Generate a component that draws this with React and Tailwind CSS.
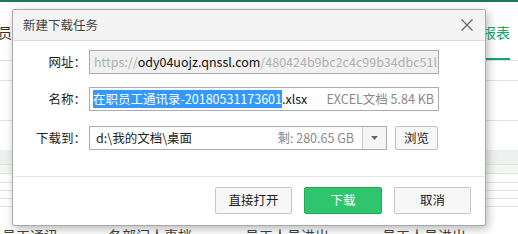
import React from "react";

const F = { fontFamily: '"Noto Sans CJK SC", "Noto Sans", sans-serif' };

function Bg() {
  return (
    <div className="relative w-[518px] h-[234px] overflow-hidden bg-white" style={F}>
      <div className="h-[2px] bg-[#1d7a50]" />
      <div className="flex h-[59px] border-b border-[#e0e0e0] items-start">
        <div className="mt-[22px] ml-[-2px] text-[14px] text-[#333] leading-[16px]">员工</div>
        <div className="flex-1" />
        <div className="mr-[8px] flex flex-col h-full items-stretch">
          <div className="mt-[22px] text-[14px] leading-[16px] text-[#16a56e]">报表</div>
          <div className="mt-auto h-[2px] bg-[#16a56e]" />
        </div>
      </div>
      <div className="h-[20px] border-b border-[#e0e0e0]" />
      <div className="h-[40px] border-b border-[#e0e0e0]" />
      <div className="h-[29px]" />
      <div className="h-[15px] bg-[#eef2ee] border-b border-[#dde4dd]" />
      <div className="h-[9px] bg-[#f4f6f4] border-b border-[#dde4dd]" />
      <div className="h-[9px] border-b border-[#e3e3e3]" />
      <div className="h-[8px] border-b border-[#e3e3e3]" />
      <div className="h-[8px] border-b border-[#e3e3e3]" />
      <div className="h-[8px] border-b border-[#e3e3e3]" />
      <div className="h-[19px]" />
      <div className="flex text-[14px] leading-[16px] text-[#444] mt-[1px]">
        <span className="ml-[2px] w-[106px]">员工通讯</span>
        <span className="w-[137px]">各部门人事档</span>
        <span className="w-[137px]">员工人员进出</span>
        <span>员工人员进出</span>
      </div>
    </div>
  );
}

function Label({ children }) {
  return (
    <div className="w-[73px] text-right text-[12.5px] text-[#222] whitespace-nowrap">
      {children}
    </div>
  );
}

function Dialog() {
  return (
    <div
      className="absolute left-[12px] top-[9px] w-[474px] h-[217px] border border-[#a9a9a9] rounded-[2px] bg-white flex flex-col shadow-[2px_3px_10px_rgba(0,0,0,0.28)]"
      style={F}
    >
      <div className="h-[31px] shrink-0 bg-[#f4f4f4] border-b border-[#dcdcdc] flex items-center pl-[10px] pr-[12px] rounded-t-[2px]">
        <span className="text-[12.5px] text-[#444] leading-none">新建下载任务</span>
        <div className="flex-1" />
        <svg width="12" height="12" viewBox="0 0 12 12">
          <path d="M0.5 0.5 L11.5 11.5 M11.5 0.5 L0.5 11.5" stroke="#666" strokeWidth="1.2" />
        </svg>
      </div>

      <div className="flex flex-col pt-[9px]">
        <div className="flex items-center h-[24px]">
          <Label>网址：</Label>
          <div className="ml-[3px] w-[350px] h-[24px] bg-[#f0f0f0] border border-[#acacac] flex items-center pl-[4px] overflow-hidden whitespace-nowrap text-[12.5px]">
            <span className="text-[#b0b0b0]">https://</span>
            <span className="text-[#111]">ody04uojz.qnssl.com</span>
            <span className="text-[#b0b0b0]">/480424b9bc2c4c99b34dbc51l</span>
          </div>
        </div>

        <div className="flex items-center h-[24px] mt-[13px]">
          <Label>名称：</Label>
          <div className="ml-[3px] w-[350px] h-[24px] bg-white border border-[#acacac] flex items-center pl-[3px] pr-[4px] overflow-hidden whitespace-nowrap text-[12.5px]">
            <span className="bg-[#3399ff] text-white leading-[18px]">在职员工通讯录-20180531173601</span>
            <span className="text-[#111]">.xlsx</span>
            <div className="flex-1" />
            <span className="text-[#8a8a8a]">EXCEL文档 5.84 KB</span>
          </div>
        </div>

        <div className="flex items-center h-[24px] mt-[15px]">
          <Label>下载到：</Label>
          <div className="ml-[3px] w-[298px] h-[24px] bg-white border border-[#acacac] flex items-stretch overflow-hidden whitespace-nowrap text-[12.5px]">
            <div className="flex-1 flex items-center pl-[6px] pr-[8px]">
              <span className="text-[#222]">d:\我的文档\桌面</span>
              <div className="flex-1" />
              <span className="text-[#8a8a8a]">剩: 280.65 GB</span>
            </div>
            <div className="w-[24px] bg-[#f5f5f5] border-l border-[#c8c8c8] flex items-center justify-center">
              <svg width="7" height="4" viewBox="0 0 7 4">
                <path d="M0 0 L7 0 L3.5 4 Z" fill="#666" />
              </svg>
            </div>
          </div>
          <div className="ml-[8px] w-[43px] h-[24px] bg-[#f7f7f7] border border-[#c0c0c0] rounded-[2px] flex items-center justify-center text-[12.5px] text-[#222]">
            浏览
          </div>
        </div>
      </div>

      <div className="mt-[26px] border-t border-[#e6e6e6] flex justify-end gap-[12px] pt-[10px] pr-[14px]">
        <div className="w-[77px] h-[27px] bg-[#f7f7f7] border border-[#c6c6c6] rounded-[2px] flex items-center justify-center text-[12.5px] text-[#222]">
          直接打开
        </div>
        <div className="w-[78px] h-[27px] bg-[#2ec56c] border border-[#22aa5a] rounded-[2px] flex items-center justify-center text-[12.5px] text-white">
          下载
        </div>
        <div className="w-[77px] h-[27px] bg-[#f7f7f7] border border-[#c6c6c6] rounded-[2px] flex items-center justify-center text-[12.5px] text-[#222]">
          取消
        </div>
      </div>
    </div>
  );
}

export default function App() {
  return (
    <div className="relative w-[518px] h-[234px] overflow-hidden">
      <Bg />
      <Dialog />
    </div>
  );
}
